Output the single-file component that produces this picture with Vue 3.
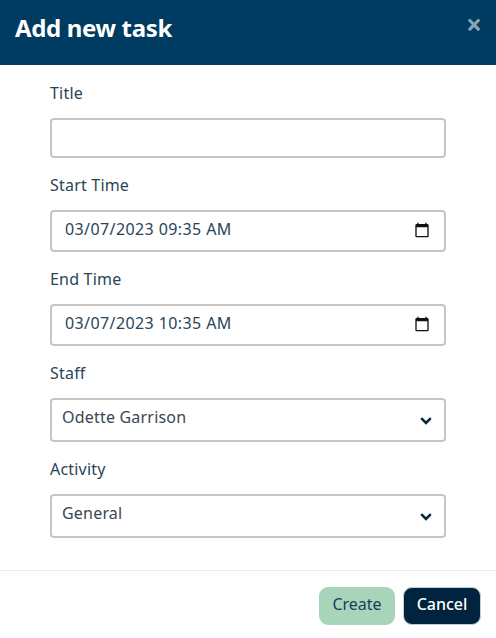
<template>
  <div class="modal">
    <div class="modal__header">
      <h1 class="modal__title">Add new task</h1>
      <button class="modal__close" type="button">×</button>
    </div>
    <div class="modal__body">
      <div class="field">
        <label class="field__label">Title</label>
        <input class="field__input field__input--text" type="text" v-model="form.title" />
      </div>
      <div class="field">
        <label class="field__label">Start Time</label>
        <div class="picker">
          <input class="field__input field__input--date" type="text" v-model="form.start" />
          <svg class="picker__icon" viewBox="0 0 24 24" width="16" height="16">
            <path :d="calendarPath" fill="#111" />
          </svg>
        </div>
      </div>
      <div class="field">
        <label class="field__label">End Time</label>
        <div class="picker">
          <input class="field__input field__input--date" type="text" v-model="form.end" />
          <svg class="picker__icon" viewBox="0 0 24 24" width="16" height="16">
            <path :d="calendarPath" fill="#111" />
          </svg>
        </div>
      </div>
      <div class="field">
        <label class="field__label">Staff</label>
        <div class="select">
          <select class="field__input select__el" v-model="form.staff">
            <option>Odette Garrison</option>
          </select>
          <svg class="select__arrow" viewBox="0 0 12 8" width="12" height="8">
            <path d="M1.2 1.2 L6 6 L10.8 1.2" fill="none" stroke="#002743" stroke-width="2.5" />
          </svg>
        </div>
      </div>
      <div class="field">
        <label class="field__label">Activity</label>
        <div class="select">
          <select class="field__input select__el" v-model="form.activity">
            <option>General</option>
          </select>
          <svg class="select__arrow" viewBox="0 0 12 8" width="12" height="8">
            <path d="M1.2 1.2 L6 6 L10.8 1.2" fill="none" stroke="#002743" stroke-width="2.5" />
          </svg>
        </div>
      </div>
    </div>
    <div class="modal__footer">
      <button class="btn btn--create" type="button">Create</button>
      <button class="btn btn--cancel" type="button">Cancel</button>
    </div>
  </div>
</template>

<script setup>
import { reactive } from 'vue'

const calendarPath = 'M20 3h-1V1h-2v2H7V1H5v2H4c-1.1 0-2 .9-2 2v16c0 1.1.9 2 2 2h16c1.1 0 2-.9 2-2V5c0-1.1-.9-2-2-2zm0 18H4V8h16v13z'

const form = reactive({
  title: '',
  start: '03/07/2023 09:35 AM',
  end: '03/07/2023 10:35 AM',
  staff: 'Odette Garrison',
  activity: 'General',
})
</script>

<style>
html, body {
  margin: 0;
  background: #fff;
}
</style>

<style scoped>
.modal {
  width: 496px;
  height: 638px;
  background: #fff;
  display: flex;
  flex-direction: column;
  font-family: "Noto Sans", "Open Sans", sans-serif;
  color: #2a4558;
  overflow: hidden;
}

.modal__header {
  height: 65px;
  box-sizing: border-box;
  flex-shrink: 0;
  background: #003b61;
  display: flex;
  justify-content: space-between;
  padding: 0 15px;
}
.modal__title {
  margin: 0;
  font-size: 24px;
  line-height: 56px;
  font-weight: 700;
  color: #fff;
  letter-spacing: -0.35px;
}
.modal__close {
  border: none;
  background: none;
  padding: 0;
  margin: 8px -1px 0 0;
  height: 32px;
  color: #8aa3b6;
  font-family: inherit;
  font-size: 28px;
  font-weight: 700;
  line-height: 32px;
  cursor: pointer;
}

.modal__body {
  flex: 1;
  padding: 17px 50px 0;
  display: flex;
  flex-direction: column;
  gap: 16px;
}

.field__label {
  display: block;
  font-size: 16px;
  line-height: 22px;
  margin-bottom: 14px;
  letter-spacing: 0.2px;
}
.field__input {
  display: block;
  width: 100%;
  box-sizing: border-box;
  border: 2px solid #c6c6c6;
  border-radius: 4px;
  background: #fff;
  outline: none;
  font-family: inherit;
  font-size: 16px;
  color: #2a4558;
}
.field__input--text {
  height: 40px;
}
.field__input--date {
  height: 42px;
  padding: 0 36px 4px 13px;
  letter-spacing: 0.4px;
}

.picker {
  position: relative;
}
.picker__icon {
  position: absolute;
  right: 16px;
  top: 12px;
}

.select {
  position: relative;
}
.select__el {
  height: 44px;
  padding: 0 30px 6px 10px;
  appearance: none;
  color: #3c4650;
  letter-spacing: 0.2px;
}
.select__arrow {
  position: absolute;
  right: 14px;
  top: 19px;
}

.modal__footer {
  height: 68px;
  box-sizing: border-box;
  flex-shrink: 0;
  border-top: 1px solid #ebebeb;
  display: flex;
  justify-content: flex-end;
  align-items: flex-start;
  gap: 8px;
  padding: 16px 15px 0;
}
.btn {
  height: 38px;
  box-sizing: border-box;
  border: 1px solid transparent;
  border-radius: 9px;
  padding: 0 0 4px;
  font-family: inherit;
  font-size: 16px;
  cursor: pointer;
}
.btn--create {
  width: 76px;
  background: #a8d5b9;
  color: #1f3d57;
}
.btn--cancel {
  width: 78px;
  background: #00243d;
  border-color: #c3ccd2;
  color: #fff;
  font-weight: 500;
}
</style>
